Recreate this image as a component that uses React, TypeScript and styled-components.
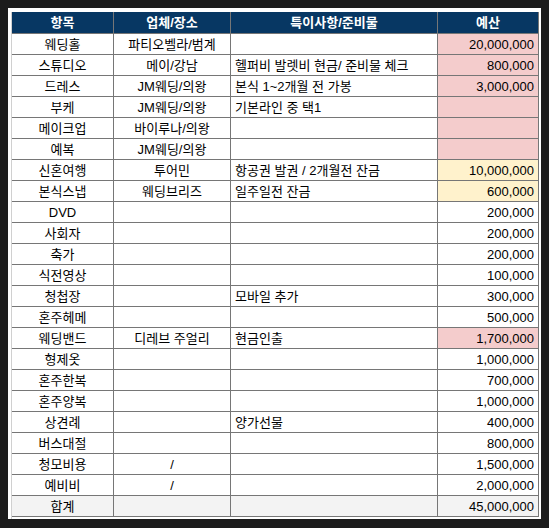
import React from "react";
import styled, { createGlobalStyle } from "styled-components";

const Global = createGlobalStyle`
  html, body { margin: 0; padding: 0; background: #1c1c1c; }
  body { font-family: "Liberation Sans", "Noto Sans CJK KR", Arial, sans-serif; }
  * { box-sizing: border-box; }
`;

const Panel = styled.div`
  margin: 8px;
  width: 533px;
  height: 511px;
  background: #ffffff;
  padding: 4px 0 0 3px;
  display: flex;
`;

const Sheet = styled.div`
  border-left: 1px solid #d0d0d0;
  height: 100%;
  display: flex;
  flex-direction: column;
`;

const COLS = "102px 117px 207px 101px";

const Row = styled.div<{ $head?: boolean }>`
  display: grid;
  grid-template-columns: ${COLS};
  height: ${(p) => (p.$head ? 22 : 21)}px;
`;

type Tone = "none" | "pink" | "yellow" | "gray" | "head";

const bg: Record<Tone, string> = {
  none: "#ffffff",
  pink: "#f4cccc",
  yellow: "#fff2cc",
  gray: "#f3f3f3",
  head: "#073763",
};

const Cell = styled.div<{ $tone?: Tone; $align?: "left" | "center" | "right" }>`
  display: flex;
  align-items: center;
  justify-content: ${(p) =>
    p.$align === "left" ? "flex-start" : p.$align === "right" ? "flex-end" : "center"};
  padding: 0 4px 0 4px;
  border-right: 1px solid #767676;
  border-bottom: 1px solid #767676;
  background: ${(p) => bg[p.$tone || "none"]};
  color: ${(p) => (p.$tone === "head" ? "#ffffff" : "#000000")};
  font-weight: ${(p) => (p.$tone === "head" ? 700 : 400)};
  font-size: 13px;
  line-height: 1;
  white-space: nowrap;
  overflow: hidden;
`;

type Item = {
  name: string;
  vendor?: string;
  note?: string;
  budget?: string;
  tone?: Tone;
  rowTone?: Tone;
};

const items: Item[] = [
  { name: "웨딩홀", vendor: "파티오벨라/범계", budget: "20,000,000", tone: "pink" },
  { name: "스튜디오", vendor: "메이/강남", note: "헬퍼비 발렛비 현금/ 준비물 체크", budget: "800,000", tone: "pink" },
  { name: "드레스", vendor: "JM웨딩/의왕", note: "본식 1~2개월 전 가봉", budget: "3,000,000", tone: "pink" },
  { name: "부케", vendor: "JM웨딩/의왕", note: "기본라인 중 택1", tone: "pink" },
  { name: "메이크업", vendor: "바이루나/의왕", tone: "pink" },
  { name: "예복", vendor: "JM웨딩/의왕", tone: "pink" },
  { name: "신혼여행", vendor: "투어민", note: "항공권 발권 / 2개월전 잔금", budget: "10,000,000", tone: "yellow" },
  { name: "본식스냅", vendor: "웨딩브리즈", note: "일주일전 잔금", budget: "600,000", tone: "yellow" },
  { name: "DVD", budget: "200,000" },
  { name: "사회자", budget: "200,000" },
  { name: "축가", budget: "200,000" },
  { name: "식전영상", budget: "100,000" },
  { name: "청첩장", note: "모바일 추가", budget: "300,000" },
  { name: "혼주헤메", budget: "500,000" },
  { name: "웨딩밴드", vendor: "디레브 주얼리", note: "현금인출", budget: "1,700,000", tone: "pink" },
  { name: "형제옷", budget: "1,000,000" },
  { name: "혼주한복", budget: "700,000" },
  { name: "혼주양복", budget: "1,000,000" },
  { name: "상견례", note: "양가선물", budget: "400,000" },
  { name: "버스대절", budget: "800,000" },
  { name: "청모비용", vendor: "/", budget: "1,500,000" },
  { name: "예비비", vendor: "/", budget: "2,000,000" },
  { name: "합계", budget: "45,000,000", tone: "gray", rowTone: "gray" },
];

export default function App() {
  return (
    <>
      <Global />
      <Panel>
        <Sheet>
          <Row $head>
            <Cell $tone="head">항목</Cell>
            <Cell $tone="head">업체/장소</Cell>
            <Cell $tone="head">특이사항/준비물</Cell>
            <Cell $tone="head">예산</Cell>
          </Row>
          {items.map((it) => (
            <Row key={it.name}>
              <Cell $tone={it.rowTone}>{it.name}</Cell>
              <Cell $tone={it.rowTone}>{it.vendor}</Cell>
              <Cell $tone={it.rowTone} $align="left">{it.note}</Cell>
              <Cell $tone={it.tone} $align="right">{it.budget}</Cell>
            </Row>
          ))}
        </Sheet>
      </Panel>
    </>
  );
}
